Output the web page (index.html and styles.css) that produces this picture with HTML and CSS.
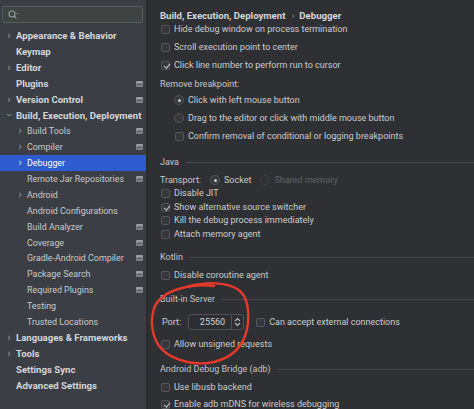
FILE: index.html
```html
<!DOCTYPE html>
<html>
<head>
<meta charset="utf-8">
<link rel="stylesheet" href="styles.css">
</head>
<body>
<div class="app">
  <aside class="side">
    <div class="search">
      <svg class="mag" width="11" height="9" viewBox="0 0 11 9"><circle cx="4" cy="4" r="3" fill="none" stroke="#9a9ea3" stroke-width="1.1"/><path d="M6.2 6.2 L8.3 8.3" stroke="#9a9ea3" stroke-width="1.2"/><path d="M8.6 3.3 L9.6 4.3 L10.6 3.3" fill="none" stroke="#9a9ea3" stroke-width="0.8"/></svg>
    </div>
    <ul class="tree">
      <li class="item top"><span class="chev">›</span><span class="lbl">Appearance &amp; Behavior</span></li>
      <li class="item top"><span class="chev"></span><span class="lbl">Keymap</span></li>
      <li class="item top"><span class="chev">›</span><span class="lbl">Editor</span></li>
      <li class="item top"><span class="chev"></span><span class="lbl">Plugins</span><span class="proj"></span></li>
      <li class="item top"><span class="chev">›</span><span class="lbl">Version Control</span><span class="proj"></span></li>
      <li class="item top"><span class="chev open">›</span><span class="lbl">Build, Execution, Deployment</span></li>
      <li class="item sub"><span class="chev">›</span><span class="lbl">Build Tools</span><span class="proj"></span></li>
      <li class="item sub"><span class="chev">›</span><span class="lbl">Compiler</span><span class="proj"></span></li>
      <li class="item sub sel"><span class="chev">›</span><span class="lbl">Debugger</span></li>
      <li class="item sub"><span class="chev"></span><span class="lbl">Remote Jar Repositories</span><span class="proj"></span></li>
      <li class="item sub"><span class="chev">›</span><span class="lbl">Android</span></li>
      <li class="item sub"><span class="chev"></span><span class="lbl">Android Configurations</span></li>
      <li class="item sub"><span class="chev"></span><span class="lbl">Build Analyzer</span><span class="proj"></span></li>
      <li class="item sub"><span class="chev"></span><span class="lbl">Coverage</span><span class="proj"></span></li>
      <li class="item sub"><span class="chev"></span><span class="lbl">Gradle-Android Compiler</span><span class="proj"></span></li>
      <li class="item sub"><span class="chev"></span><span class="lbl">Package Search</span><span class="proj"></span></li>
      <li class="item sub"><span class="chev"></span><span class="lbl">Required Plugins</span><span class="proj"></span></li>
      <li class="item sub"><span class="chev"></span><span class="lbl">Testing</span></li>
      <li class="item sub"><span class="chev"></span><span class="lbl">Trusted Locations</span></li>
      <li class="item top"><span class="chev">›</span><span class="lbl">Languages &amp; Frameworks</span></li>
      <li class="item top"><span class="chev">›</span><span class="lbl">Tools</span></li>
      <li class="item top"><span class="chev"></span><span class="lbl">Settings Sync</span></li>
      <li class="item top"><span class="chev"></span><span class="lbl">Advanced Settings</span></li>
    </ul>
  </aside>
  <main class="main">
    <div class="row crumb">Build, Execution, Deployment <span class="sep">›</span> Debugger</div>
    <div class="row g2"><span class="cb"></span>Hide debug window on process termination</div>
    <div class="row g6"><span class="cb"></span>Scroll execution point to center</div>
    <div class="row g6"><span class="cb on"></span>Click line number to perform run to cursor</div>
    <div class="row g7 label">Remove breakpoint:</div>
    <div class="row g4 ind"><span class="rb on"></span>Click with left mouse button</div>
    <div class="row g6 ind"><span class="rb"></span>Drag to the editor or click with middle mouse button</div>
    <div class="row g6 ind"><span class="cb"></span>Confirm removal of conditional or logging breakpoints</div>
    <div class="row g14 sect"><span>Java</span><i class="line"></i></div>
    <div class="row g6 label">Transport:<span class="rb on r1"></span>Socket<span class="rb dis r2"></span><span class="dim">Shared memory</span></div>
    <div class="row g1"><span class="cb"></span>Disable JIT</div>
    <div class="row g2"><span class="cb on"></span>Show alternative source switcher</div>
    <div class="row g1"><span class="cb"></span>Kill the debug process immediately</div>
    <div class="row g2"><span class="cb"></span>Attach memory agent</div>
    <div class="row g11 sect"><span>Kotlin</span><i class="line"></i></div>
    <div class="row g6"><span class="cb"></span>Disable coroutine agent</div>
    <div class="row g12 sect"><span>Built-in Server</span><i class="line"></i></div>
    <div class="row port g8">
      <span class="plabel">Port:</span>
      <span class="field"><span class="num">25560</span><span class="spin"><svg width="7" height="10" viewBox="0 0 7 10"><path d="M1 4 L3.5 1.5 L6 4" fill="none" stroke="#b9bbbf" stroke-width="1.1"/><path d="M1 6 L3.5 8.5 L6 6" fill="none" stroke="#b9bbbf" stroke-width="1.1"/></svg></span></span>
      <span class="cb ext"></span>Can accept external connections
    </div>
    <div class="row g7"><span class="cb"></span>Allow unsigned requests</div>
    <div class="row g13 sect"><span>Android Debug Bridge (adb)</span><i class="line"></i></div>
    <div class="row g6"><span class="cb"></span>Use libusb backend</div>
    <div class="row g5"><span class="cb on"></span>Enable adb mDNS for wireless debugging</div>
  </main>
  <svg class="ring" width="474" height="409" viewBox="0 0 474 409">
    <path d="M186 287 C205 282 228 281 240 291 C250 300 250 322 245 336 C240 350 228 360 208 363 C188 365 168 358 159 346 C151 334 150 318 155 306 C160 296 172 290 186 287 C196 285 206 285 214 286" fill="none" stroke="#e5392c" stroke-width="2.4" stroke-linecap="round"/>
  </svg>
</div>
</body>
</html>
```
FILE: styles.css
```css
* { box-sizing: border-box; }
html, body { margin: 0; padding: 0; }
body {
  width: 474px;
  height: 409px;
  overflow: hidden;
  background: #2f3033;
  font-family: Roboto, Inter, "Noto Sans", "Liberation Sans", sans-serif;
  color: #cdd0d4;
}
.app {
  position: relative;
  display: flex;
  width: 474px;
  height: 409px;
}
.side {
  width: 148px;
  flex: none;
  background: #3b3e44;
  border-right: 2px solid #2a2b2e;
  padding-top: 6px;
}
.search {
  margin-left: 2px;
  width: 141px;
  height: 17px;
  border: 1px solid #575d5c;
  border-radius: 2px;
  background: #3f4443;
  display: flex;
  align-items: center;
  padding-left: 5px;
}
.tree {
  list-style: none;
  margin: 5px 0 0 0;
  padding: 0;
}
.item {
  height: 15.9px;
  display: flex;
  align-items: center;
  font-size: 9.6px;
  white-space: nowrap;
  position: relative;
}
.item.top .lbl { font-weight: 700; color: #d5d7da; }
.item.sub .lbl { color: #c8cace; font-size: 8.9px; }
.chev {
  width: 8px;
  flex: none;
  color: #a2a5aa;
  font-size: 10px;
  line-height: 10px;
  text-align: center;
  margin-right: 2px;
}
.chev.open { transform: rotate(90deg); }
.item.top .chev { margin-left: 5px; margin-right: 3px; }
.item.sub .chev { margin-left: 16px; margin-right: 3px; }
.item.sel { background: #2f5bd0; }
.item.sel .lbl { color: #ffffff; }
.item.sel .chev { color: #dfe5f7; }
.proj {
  position: absolute;
  left: 136px;
  top: 5px;
  width: 7px;
  height: 6px;
  border-radius: 1px;
  background: #7f8388;
  border-top: 2px solid #9a9ea3;
}
.proj::after {
  content: "";
  position: absolute;
  left: 1px;
  right: 1px;
  top: 1px;
  height: 1px;
  background: #55585d;
}
.main {
  flex: 1;
  display: flex;
  flex-direction: column;
  padding: 9px 0 0 12px;
  font-size: 9px;
  color: #cbcdd1;
  overflow: hidden;
}
.row {
  height: 12px;
  display: flex;
  align-items: center;
  white-space: nowrap;
  flex: none;
}
.crumb { font-weight: 700; color: #d6d8db; font-size: 9.6px; }
.crumb .sep { color: #8b8e93; margin: 0 5px 0 6px; font-weight: 400; }
.g1 { margin-top: 1px; }
.g2 { margin-top: 2px; }
.g4 { margin-top: 4px; }
.g5 { margin-top: 5px; }
.g6 { margin-top: 6px; }
.g7 { margin-top: 7px; }
.g8 { margin-top: 8px; }
.g11 { margin-top: 11px; }
.g12 { margin-top: 12px; }
.g13 { margin-top: 13px; }
.g14 { margin-top: 14px; }
.ind { padding-left: 14px; }
.label { padding-left: 0; color: #c6c8cc; }
.cb {
  width: 9px;
  height: 9px;
  flex: none;
  border: 1px solid #55575c;
  border-radius: 2px;
  background: #36373b;
  margin: 0 4px 0 1px;
  position: relative;
}
.cb.on::after {
  content: "";
  position: absolute;
  left: 2.5px;
  top: 0.5px;
  width: 2.5px;
  height: 5px;
  border-right: 1.2px solid #c4c6ca;
  border-bottom: 1.2px solid #c4c6ca;
  transform: rotate(40deg);
}
.rb {
  width: 10px;
  height: 10px;
  flex: none;
  border: 1px solid #55575c;
  border-radius: 50%;
  background: #36373b;
  margin-right: 4px;
  position: relative;
}
.rb.on::after {
  content: "";
  position: absolute;
  left: 2.5px;
  top: 2.5px;
  width: 3px;
  height: 3px;
  border-radius: 50%;
  background: #c8cace;
}
.rb.dis { border-color: #3f4044; background: #303134; }
.r1 { margin-left: 9px; }
.r2 { margin-left: 9px; }
.dim { color: #5f6165; }
.sect { color: #c3c5c9; }
.sect .line {
  flex: 1;
  height: 1px;
  background: #45474b;
  margin-left: 6px;
}
.port { height: 18px; }
.plabel { margin-left: 2px; margin-right: 7px; }
.field {
  width: 56px;
  height: 16px;
  border: 1px solid #505257;
  border-radius: 3px;
  background: #2d2e31;
  display: flex;
  align-items: center;
  margin-right: 11px;
}
.num { flex: 1; text-align: right; padding-right: 6px; color: #d0d2d6; }
.spin {
  width: 12px;
  height: 14px;
  border-left: 1px solid #505257;
  display: flex;
  align-items: center;
  justify-content: center;
}
.ext { margin-right: 4px; }
.ring {
  position: absolute;
  left: 0;
  top: 0;
  pointer-events: none;
}
```
